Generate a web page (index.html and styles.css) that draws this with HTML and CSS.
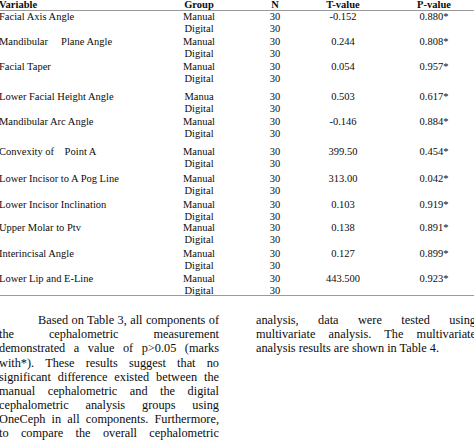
FILE: index.html
```html
<!DOCTYPE html>
<html lang="en">
<head>
<meta charset="utf-8">
<title>Table 3</title>
<link rel="stylesheet" href="styles.css">
</head>
<body>
<div class="page">
  <div class="tbl">
    <div class="row head">
      <span class="c-var">Variable</span><span>Group</span><span>N</span><span>T-value</span><span>P-value</span>
    </div>
    <div class="blk top">
      <div class="row"><span class="c-var">Facial Axis Angle</span><span>Manual</span><span>30</span><span>-0.152</span><span>0.880*</span></div>
      <div class="row"><span class="c-var"></span><span>Digital</span><span>30</span><span></span><span></span></div>
    </div>
    <div class="blk md">
      <div class="row"><span class="c-var">Mandibular&nbsp;&nbsp;&nbsp;&nbsp; Plane Angle</span><span>Manual</span><span>30</span><span>0.244</span><span>0.808*</span></div>
      <div class="row"><span class="c-var"></span><span>Digital</span><span>30</span><span></span><span></span></div>
    </div>
    <div class="blk xl">
      <div class="row"><span class="c-var">Facial Taper</span><span>Manual</span><span>30</span><span>0.054</span><span>0.957*</span></div>
      <div class="row"><span class="c-var"></span><span>Digital</span><span>30</span><span></span><span></span></div>
    </div>
    <div class="blk md">
      <div class="row"><span class="c-var">Lower Facial Height Angle</span><span>Manua</span><span>30</span><span>0.503</span><span>0.617*</span></div>
      <div class="row"><span class="c-var"></span><span>Digital</span><span>30</span><span></span><span></span></div>
    </div>
    <div class="blk xl">
      <div class="row"><span class="c-var">Mandibular Arc Angle</span><span>Manual</span><span>30</span><span>-0.146</span><span>0.884*</span></div>
      <div class="row"><span class="c-var"></span><span>Digital</span><span>30</span><span></span><span></span></div>
    </div>
    <div class="blk lg">
      <div class="row"><span class="c-var">Convexity of&nbsp;&nbsp;&nbsp; Point A</span><span>Manual</span><span>30</span><span>399.50</span><span>0.454*</span></div>
      <div class="row"><span class="c-var"></span><span>Digital</span><span>30</span><span></span><span></span></div>
    </div>
    <div class="blk md">
      <div class="row"><span class="c-var">Lower Incisor to A Pog Line</span><span>Manual</span><span>30</span><span>313.00</span><span>0.042*</span></div>
      <div class="row"><span class="c-var"></span><span>Digital</span><span>30</span><span></span><span></span></div>
    </div>
    <div class="blk sm">
      <div class="row"><span class="c-var">Lower Incisor Inclination</span><span>Manual</span><span>30</span><span>0.103</span><span>0.919*</span></div>
      <div class="row"><span class="c-var"></span><span>Digital</span><span>30</span><span></span><span></span></div>
    </div>
    <div class="blk md">
      <div class="row"><span class="c-var">Upper Molar to Ptv</span><span>Manual</span><span>30</span><span>0.138</span><span>0.891*</span></div>
      <div class="row"><span class="c-var"></span><span>Digital</span><span>30</span><span></span><span></span></div>
    </div>
    <div class="blk md">
      <div class="row"><span class="c-var">Interincisal Angle</span><span>Manual</span><span>30</span><span>0.127</span><span>0.899*</span></div>
      <div class="row"><span class="c-var"></span><span>Digital</span><span>30</span><span></span><span></span></div>
    </div>
    <div class="blk end">
      <div class="row"><span class="c-var">Lower Lip and E-Line</span><span>Manual</span><span>30</span><span>443.500</span><span>0.923*</span></div>
      <div class="row"><span class="c-var"></span><span>Digital</span><span>30</span><span></span><span></span></div>
    </div>
  </div>

  <div class="text">
    <p class="col">
      <span class="ln first">Based on Table 3, all components of</span>
      <span class="ln">the cephalometric measurement</span>
      <span class="ln">demonstrated a value of p&gt;0.05 (marks</span>
      <span class="ln">with*). These results suggest that no</span>
      <span class="ln">significant difference existed between the</span>
      <span class="ln">manual cephalometric and the digital</span>
      <span class="ln">cephalometric analysis groups using</span>
      <span class="ln">OneCeph in all components. Furthermore,</span>
      <span class="ln">to compare the overall cephalometric</span>
    </p>
    <p class="col">
      <span class="ln">analysis, data were tested using</span>
      <span class="ln">multivariate analysis. The multivariate</span>
      <span class="ln last">analysis results are shown in Table 4.</span>
    </p>
  </div>
</div>
</body>
</html>
```

FILE: styles.css
```css
html, body {
  margin: 0;
  padding: 0;
  background: #ffffff;
  overflow: hidden;
}

.page {
  width: 474px;
  height: 442px;
  overflow: hidden;
  color: #0c0c0c;
  font-family: "Liberation Serif", "Times New Roman", serif;
}

.tbl {
  margin-left: -1px;
  width: 503px;
  border-bottom: 1.5px solid #9a9a9a;
  font-size: 10.5px;
}

.row {
  display: grid;
  grid-template-columns: 169px 62px 90px 46px 136px;
  line-height: 12px;
  white-space: nowrap;
}

.row > span {
  text-align: center;
}

.row > .c-var {
  text-align: left;
}

.head {
  font-weight: bold;
  line-height: 10px;
  padding-top: 0;
  border-bottom: 1.5px solid #9a9a9a;
}

.blk.top { height: 24.5px; }
.blk.md { height: 25.5px; }
.blk.lg { height: 27.7px; }
.blk.xl { height: 29.5px; }
.blk.sm { height: 23.6px; }
.blk.end { height: 22px; }

.text {
  display: flex;
  gap: 37px;
  margin-left: -1px;
  margin-top: 17px;
  font-size: 12.3px;
  line-height: 14.1px;
}

.col {
  margin: 0;
  width: 220px;
  flex: none;
}

.ln {
  display: block;
  white-space: nowrap;
  text-align: justify;
  text-align-last: justify;
}

.ln.first {
  text-indent: 39px;
}

.ln.last {
  text-align-last: left;
}
```
